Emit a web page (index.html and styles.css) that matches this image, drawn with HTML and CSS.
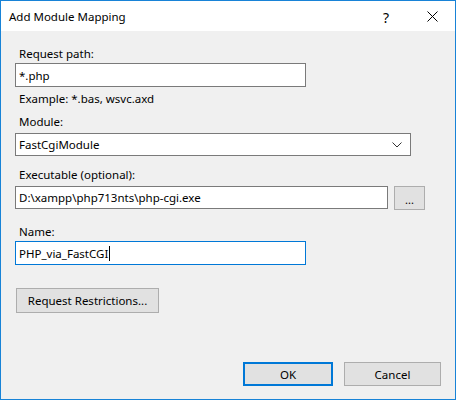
FILE: index.html
```html
<!DOCTYPE html>
<html>
<head>
<meta charset="utf-8">
<link rel="stylesheet" href="styles.css">
</head>
<body>
<div class="window">
  <div class="titlebar">
    <span class="title">Add Module Mapping</span>
    <div class="caption-buttons">
      <span class="cap-btn help">?</span>
      <span class="cap-btn close">
        <svg width="11" height="11" viewBox="0 0 11 11"><path d="M0.5 0.5 L10.5 10.5 M10.5 0.5 L0.5 10.5" stroke="#000" stroke-width="1" fill="none"/></svg>
      </span>
    </div>
  </div>
  <div class="content">
    <div class="label first">Request path:</div>
    <div class="field w-short tall">*.php</div>
    <div class="hint">Example: *.bas, wsvc.axd</div>

    <div class="label gap-sm">Module:</div>
    <div class="field select">
      <span>FastCgiModule</span>
      <svg class="chevron" width="10" height="6" viewBox="0 0 10 6"><path d="M0.5 0.5 L5 5 L9.5 0.5" stroke="#333" stroke-width="1" fill="none"/></svg>
    </div>

    <div class="label gap-md">Executable (optional):</div>
    <div class="row">
      <div class="field w-exe">D:\xampp\php713nts\php-cgi.exe</div>
      <div class="button browse">...</div>
    </div>

    <div class="label gap-lg">Name:</div>
    <div class="field w-short tall focused">PHP_via_FastCGI<span class="caret"></span></div>

    <div class="button restrictions">Request Restrictions...</div>

    <div class="footer">
      <div class="button ok">OK</div>
      <div class="button cancel">Cancel</div>
    </div>
  </div>
</div>
</body>
</html>
```

FILE: styles.css
```css
html, body {
  margin: 0;
  padding: 0;
  background: #ffffff;
}

body {
  font-family: "Noto Sans", "Open Sans", sans-serif;
  font-size: 11.5px;
  color: #000;
}

.window {
  width: 456px;
  height: 400px;
  box-sizing: border-box;
  border: 1px solid #1883d7;
  display: flex;
  flex-direction: column;
  background: #f0f0f0;
}

.titlebar {
  height: 30px;
  background: #ffffff;
  display: flex;
  align-items: center;
  justify-content: space-between;
  padding-left: 8px;
  flex: none;
}

.title {
  font-size: 11.5px;
}

.caption-buttons {
  display: flex;
  height: 100%;
}

.cap-btn {
  width: 46px;
  height: 100%;
  display: flex;
  align-items: center;
  justify-content: center;
}

.help {
  font-size: 14px;
  padding-top: 1px;
}

.content {
  flex: 1;
  display: flex;
  flex-direction: column;
  align-items: flex-start;
  padding: 15px 14px 13px 14px;
}

.label {
  line-height: 15px;
  height: 15px;
  padding-left: 4px;
  margin-bottom: 2px;
}

.gap-sm { margin-top: 8px; margin-bottom: 4px; }
.gap-md { margin-top: 11px; margin-bottom: 4px; }
.gap-lg { margin-top: 14px; }

.field {
  box-sizing: border-box;
  height: 23px;
  background: #fff;
  border: 1px solid #7a7a7a;
  display: flex;
  align-items: center;
  padding-left: 3px;
  line-height: 15px;
}

.field.tall { height: 24px; }

.w-short { width: 291px; }
.w-exe { width: 373px; }

.focused { border-color: #0078d7; }

.caret {
  display: inline-block;
  width: 1px;
  height: 15px;
  background: #000;
  margin-left: 1px;
}

.hint {
  line-height: 15px;
  margin-top: 4px;
  padding-left: 4px;
}

.select {
  width: 396px;
  justify-content: space-between;
  padding-right: 8px;
}

.chevron { display: block; }

.row {
  display: flex;
  align-items: flex-start;
  gap: 6px;
}

.button {
  box-sizing: border-box;
  background: #e1e1e1;
  border: 1px solid #adadad;
  display: flex;
  align-items: center;
  justify-content: center;
  line-height: 15px;
}

.browse {
  width: 31px;
  height: 24px;
  font-size: 11px;
  padding-top: 2px;
}

.restrictions {
  width: 143px;
  height: 25px;
  margin-top: 23px;
  margin-left: 1px;
}

.footer {
  margin-top: auto;
  align-self: stretch;
  display: flex;
  justify-content: flex-end;
  gap: 11px;
}

.ok {
  width: 90px;
  height: 24px;
  border: 2px solid #0078d7;
}

.cancel {
  width: 97px;
  height: 24px;
}
```
